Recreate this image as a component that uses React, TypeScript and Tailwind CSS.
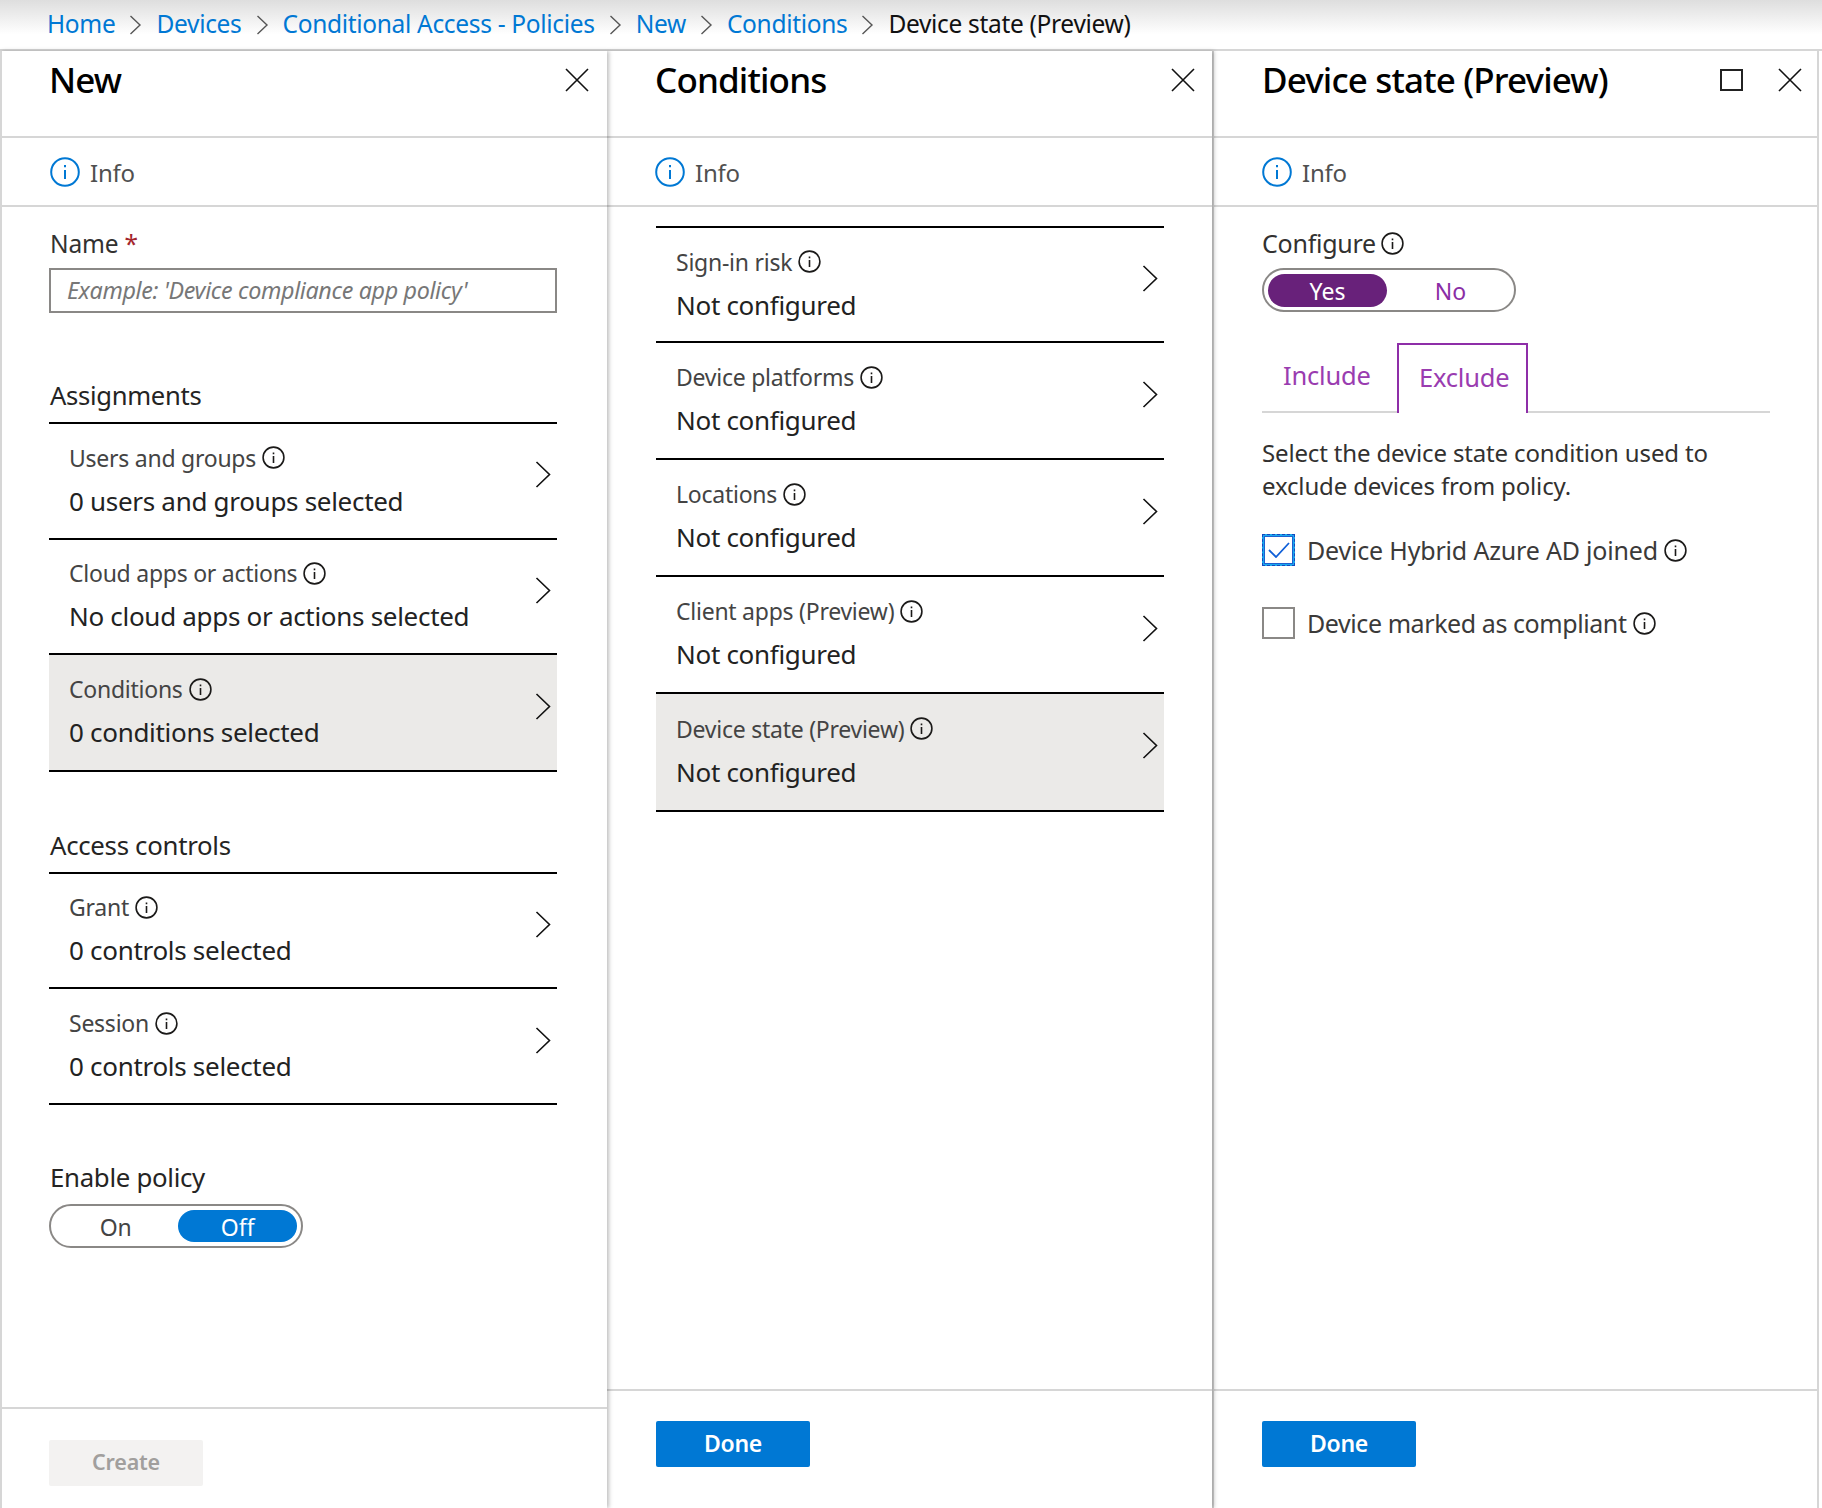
import React from "react";

function CloseIcon() {
  return (
    <svg width="24" height="24" viewBox="0 0 24 24" fill="none" stroke="#111" strokeWidth="1.6" className="shrink-0">
      <path d="M1 1l22 22M23 1L1 23" />
    </svg>
  );
}

function InfoSmall() {
  return (
    <svg width="23" height="23" viewBox="0 0 23 23" fill="none" stroke="#1b1a19" strokeWidth="1.6" className="shrink-0">
      <circle cx="11.5" cy="11.5" r="10.4" />
      <path d="M11.5 10v7M11.5 6.4v1.8" />
    </svg>
  );
}

function InfoBar() {
  return (
    <div className="h-[69px] shrink-0 border-b-2 border-[#d6d6d6] flex items-center gap-[10px] pl-[48px]">
      <svg width="30" height="30" viewBox="0 0 30 30" fill="none" stroke="#0078d4" strokeWidth="2" className="shrink-0">
        <circle cx="15" cy="15" r="13.8" />
        <path d="M15 13v9M15 8v2.2" />
      </svg>
      <span className="text-[24px] leading-[36px] text-[#505050] tracking-[-0.2px] pt-[2px]">Info</span>
    </div>
  );
}

function Chevron({ small }: { small?: boolean }) {
  if (small) {
    return (
      <svg width="13" height="22" viewBox="0 0 13 22" fill="none" stroke="#555" strokeWidth="1.4" className="shrink-0">
        <path d="M1.5 2l9.5 9-9.5 9" />
      </svg>
    );
  }
  return (
    <svg width="16" height="27" viewBox="0 0 16 27" fill="none" stroke="#111" strokeWidth="1.6" className="shrink-0 mb-[12px]">
      <path d="M1.5 1l13 12.5L1.5 26" />
    </svg>
  );
}

function Row({ label, value, active, h = "h-[115.6px]" }: { label: string; value: string; active?: boolean; h?: string }) {
  return (
    <div
      className={`${h} border-b-2 border-black flex items-center justify-between pl-[20px] pr-[6px] ${active ? "bg-[#ebeae8]" : ""}`}
    >
      <div className="mb-[3px]">
        <div className="flex items-center gap-[6px] text-[23px] leading-[36px] text-[#444] tracking-[-0.25px]">
          {label}
          <InfoSmall />
        </div>
        <div className="mt-[7px] text-[26px] leading-[36px] text-[#222] tracking-[-0.3px]">{value}</div>
      </div>
      <Chevron />
    </div>
  );
}

function Title({ text }: { text: string }) {
  return <div className="text-[35px] leading-[48px] font-medium text-black tracking-[-0.85px]">{text}</div>;
}

function DoneFooter({ inset = "pl-[49px]" }: { inset?: string }) {
  return (
    <div className={`h-[119px] shrink-0 border-t-2 border-[#d6d6d6] pt-[30px] ${inset}`}>
      <button className="w-[154px] h-[46px] bg-[#0078d4] rounded-[2px] text-white text-[23px] font-semibold tracking-[-0.3px] pb-[2px]">
        Done
      </button>
    </div>
  );
}

const crumbs = ["Home", "Devices", "Conditional Access - Policies", "New", "Conditions"];

export default function App() {
  return (
    <div className="w-[1822px] h-[1508px] overflow-hidden bg-white flex flex-col font-['Noto_Sans',sans-serif]">
      {/* breadcrumb */}
      <div className="h-[51px] shrink-0 border-b-2 border-[#d6d6d6] bg-gradient-to-b from-[#dedede] to-white to-70% flex items-center pl-[47px] gap-[14px] text-[24.5px] tracking-[-0.32px]">
        {crumbs.map((c) => (
          <React.Fragment key={c}>
            <span className="text-[#0078d4]">{c}</span>
            <Chevron small />
          </React.Fragment>
        ))}
        <span className="text-[#111]">Device state (Preview)</span>
      </div>

      <div className="flex flex-1 min-h-0">
        {/* New */}
        <div className="w-[607px] shrink-0 border-l-2 border-[#d6d6d6] flex flex-col shadow-[2px_0_4px_rgba(0,0,0,0.25)] z-10 bg-white">
          <div className="h-[87px] shrink-0 border-b-2 border-[#d6d6d6] flex justify-between pl-[47px] pr-[18px] pt-[5px]">
            <Title text="New" />
            <div className="pt-[12px]">
              <CloseIcon />
            </div>
          </div>
          <InfoBar />
          <div className="flex-1 min-h-0 pl-[47px] pr-[50px] pt-[19px]">
            <div className="pl-[1px] text-[24.5px] leading-[36px] text-[#323130] tracking-[-0.2px]">
              Name <span className="text-[#a4262c]">*</span>
            </div>
            <div className="mt-[6px] h-[45px] border-2 border-[#8a8886] flex items-center pl-[16px] pb-[1px] text-[23.3px] italic text-[#777] tracking-[-0.35px]">
              Example: 'Device compliance app policy'
            </div>
            <div className="mt-[65px] pl-[1px] pb-[8px] text-[25.6px] leading-[36px] text-[#252423] border-b-2 border-black tracking-[-0.3px]">
              Assignments
            </div>
            <Row label="Users and groups" value="0 users and groups selected" />
            <Row label="Cloud apps or actions" value="No cloud apps or actions selected" />
            <Row label="Conditions" value="0 conditions selected" active h="h-[116.5px]" />
            <div className="mt-[55px] pl-[1px] pb-[9px] text-[25.8px] leading-[36px] text-[#252423] border-b-2 border-black tracking-[-0.3px]">
              Access controls
            </div>
            <Row label="Grant" value="0 controls selected" />
            <Row label="Session" value="0 controls selected" />
            <div className="mt-[54px] pl-[1px] text-[25.8px] leading-[36px] text-[#252423] tracking-[-0.3px]">Enable policy</div>
            <div className="mt-[9px] w-[254px] h-[44px] rounded-full border-2 border-[#8a8886] flex items-center pr-[4px] text-[23px]">
              <span className="w-[128px] text-center text-[#444] pl-[2px] pt-[2px]">On</span>
              <span className="w-[119px] h-[32px] rounded-full bg-[#0078d4] text-white text-center leading-[34px]">Off</span>
            </div>
          </div>
          <div className="h-[101px] shrink-0 border-t-2 border-[#d6d6d6] pt-[31px] pl-[47px]">
            <button className="w-[154px] h-[46px] bg-[#f3f2f1] rounded-[2px] text-[#a19f9d] text-[21.5px] font-semibold tracking-[-0.2px] pb-[2px]">
              Create
            </button>
          </div>
        </div>

        {/* Conditions */}
        <div className="w-[605px] shrink-0 flex flex-col shadow-[2px_0_4px_rgba(0,0,0,0.25)] z-[5] bg-white">
          <div className="h-[87px] shrink-0 border-b-2 border-[#d6d6d6] flex justify-between pl-[48px] pr-[17px] pt-[5px]">
            <Title text="Conditions" />
            <div className="pt-[12px]">
              <CloseIcon />
            </div>
          </div>
          <InfoBar />
          <div className="flex-1 min-h-0 pl-[49px] pr-[48px] pt-[19px]">
            <div className="border-t-2 border-black">
              <Row h="h-[115px]" label="Sign-in risk" value="Not configured" />
              <Row h="h-[116.5px]" label="Device platforms" value="Not configured" />
              <Row h="h-[117px]" label="Locations" value="Not configured" />
              <Row h="h-[117.5px]" label="Client apps (Preview)" value="Not configured" />
              <Row h="h-[117.5px]" label="Device state (Preview)" value="Not configured" active />
            </div>
          </div>
          <DoneFooter />
        </div>

        {/* Device state */}
        <div className="w-[607px] shrink-0 border-l-2 border-r-2 border-[#d6d6d6] flex flex-col bg-white">
          <div className="h-[87px] shrink-0 border-b-2 border-[#d6d6d6] flex justify-between pl-[48px] pr-[15px] pt-[5px]">
            <Title text="Device state (Preview)" />
            <div className="flex items-start gap-[35px] pt-[12px]">
              <div className="w-[23px] h-[22px] border-2 border-[#222] mt-[1px]" />
              <CloseIcon />
            </div>
          </div>
          <InfoBar />
          <div className="flex-1 min-h-0 pl-[48px] pr-[47px] pt-[18px]">
            <div className="flex items-center gap-[5px] text-[25px] leading-[36px] text-[#323130] tracking-[-0.25px]">
              Configure
              <InfoSmall />
            </div>
            <div className="mt-[7px] w-[254px] h-[44px] rounded-full border-2 border-[#8a8886] flex items-center pl-[4px] text-[23px]">
              <span className="w-[119px] h-[33px] rounded-full bg-[#68217a] text-white text-center leading-[35px]">Yes</span>
              <span className="w-[127px] text-center text-[#8a2da5] pt-[2px]">No</span>
            </div>
            <div className="mt-[31px] h-[70px] border-b-2 border-[#d6d6d6] flex text-[25.5px] text-[#9a3cb0] tracking-[-0.2px]">
              <div className="w-[135px] pl-[21px] pt-[13px]">Include</div>
              <div className="w-[131px] h-[70px] border-2 border-b-0 border-[#8e2ea8] bg-white pl-[20px] pt-[13px]">Exclude</div>
            </div>
            <div className="mt-[24px] text-[24px] leading-[32.5px] text-[#323130] tracking-[-0.15px]">
              Select the device state condition used to
              <br />
              exclude devices from policy.
            </div>
            <div className="mt-[32px] flex items-center gap-[12px] h-[32px]">
              <div className="w-[33px] h-[32px] bg-[#1aa7ec] p-[1px] border border-dashed border-[#1646c0] shrink-0">
                <div className="w-full h-full bg-white border border-[#1e5fd0] flex items-center justify-center">
                  <svg width="22" height="16" viewBox="0 0 22 16" fill="none" stroke="#0f5fd8" strokeWidth="1.8">
                    <path d="M1 8l7 7L21 1" />
                  </svg>
                </div>
              </div>
              <div className="flex items-center gap-[6px] text-[25px] leading-[36px] text-[#3b3a39] tracking-[-0.18px]">
                Device Hybrid Azure AD joined
                <InfoSmall />
              </div>
            </div>
            <div className="mt-[41px] flex items-center gap-[12px] h-[32px]">
              <div className="w-[33px] h-[32px] border-2 border-[#8a8886] shrink-0" />
              <div className="flex items-center gap-[6px] text-[25px] leading-[36px] text-[#3b3a39] tracking-[-0.42px]">
                Device marked as compliant
                <InfoSmall />
              </div>
            </div>
          </div>
          <DoneFooter inset="pl-[48px]" />
        </div>
      </div>
    </div>
  );
}
